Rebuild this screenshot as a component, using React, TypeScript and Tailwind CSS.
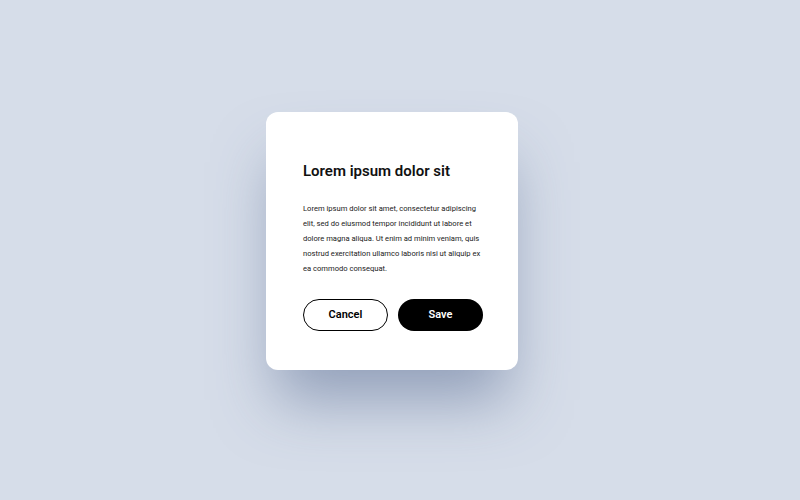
export default function App() {
  return (
    <main className="flex h-[500px] w-[800px] items-start bg-[#d6dde9] pl-[266px] pt-[112px] font-['Roboto',sans-serif]">
      <div className="h-[258px] w-[252px] rounded-[12px] bg-white px-[37px] pt-[49px] shadow-[0_40px_60px_-10px_rgba(80,100,140,0.5)]">
        <h1 className="text-[15px] font-semibold leading-[20px] text-[#111]">Lorem ipsum dolor sit</h1>
        <p className="mt-[20px] text-[7.6px] leading-[15px] text-[#1a1a1a]">
          Lorem ipsum dolor sit amet, consectetur adipiscing elit, sed do eiusmod tempor incididunt ut labore et dolore
          magna aliqua. Ut enim ad minim veniam, quis nostrud exercitation ullamco laboris nisi ut aliquip ex ea commodo
          consequat.
        </p>
        <div className="mt-[23px] flex gap-[10px]">
          <button className="h-[32px] w-[85px] shrink-0 rounded-full border-[1.5px] border-black bg-white text-[11px] font-semibold text-black">
            Cancel
          </button>
          <button className="h-[32px] w-[85px] shrink-0 rounded-full bg-black text-[11px] font-semibold text-white">
            Save
          </button>
        </div>
      </div>
    </main>
  );
}
